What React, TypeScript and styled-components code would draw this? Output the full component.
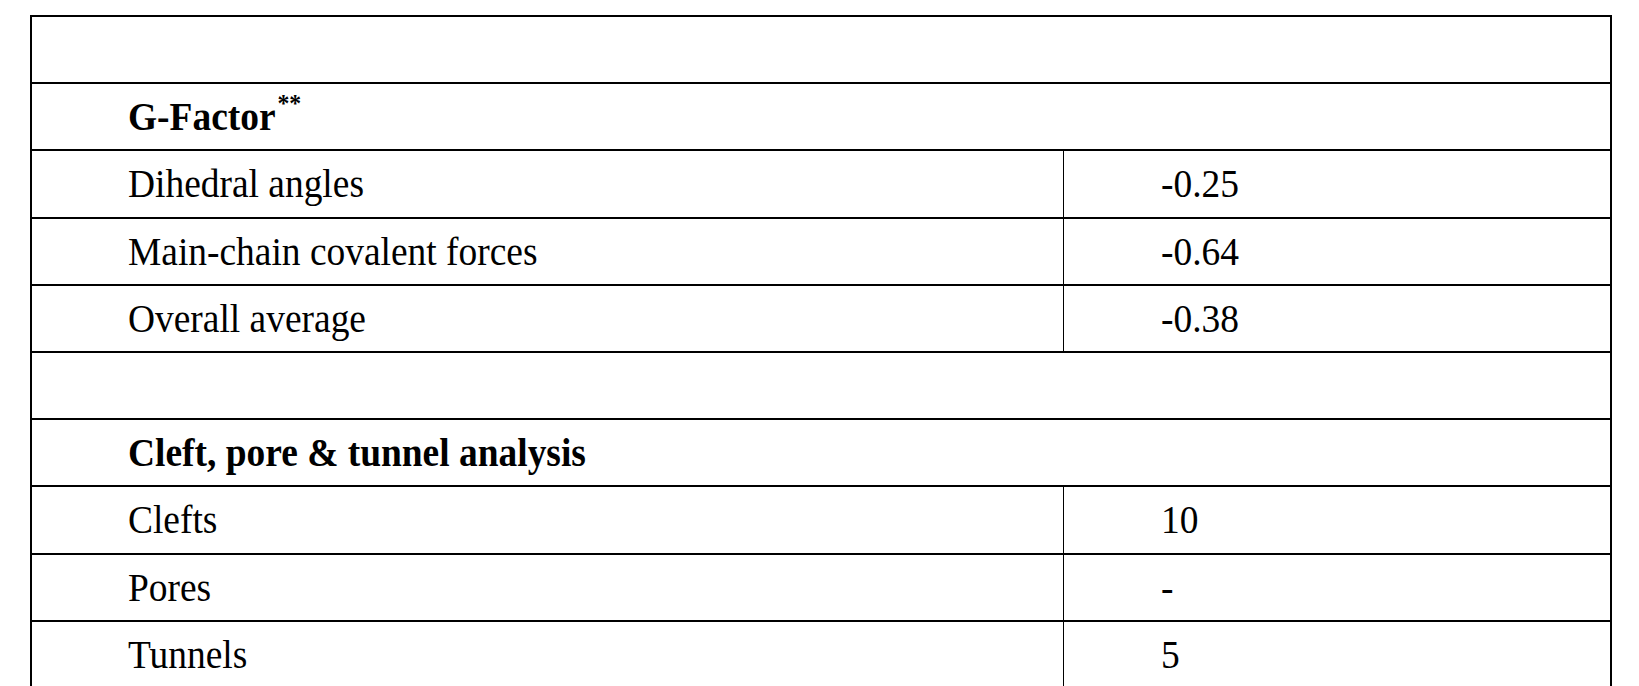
import React, { FunctionComponent } from 'react';
import styled, { createGlobalStyle } from 'styled-components';

const GlobalStyle = createGlobalStyle`
  html, body {
    margin: 0;
    padding: 0;
    background: #fff;
  }
  body {
    font-family: "Liberation Serif", "Times New Roman", serif;
    color: #000;
  }
`;

const Sheet = styled.div`
  padding: 15px 0 0 30px;
`;

const Table = styled.div`
  width: 1582px;
  box-sizing: border-box;
  border: 2px solid #000;
  border-bottom: none;
`;

const Row = styled.div`
  display: flex;
  height: 67.2px;
  box-sizing: border-box;
  border-bottom: 2px solid #000;
`;

const Cell = styled.div<{ readonly label?: boolean; readonly full?: boolean }>`
  display: flex;
  align-items: center;
  box-sizing: border-box;
  padding-left: ${({ label }) => (label ? '96px' : '97px')};
  width: ${({ full, label }) => (full ? '100%' : label ? '1032px' : 'auto')};
  flex: ${({ label, full }) => (label || full ? '0 0 auto' : '1 1 auto')};
  border-right: ${({ label, full }) => (label && !full ? '1px solid #000' : 'none')};
`;

const Text = styled.span<{ readonly bold?: boolean }>`
  display: inline-block;
  font-size: 41px;
  line-height: 1;
  font-weight: ${({ bold }) => (bold ? 700 : 400)};
  white-space: nowrap;
  transform: scaleX(0.913);
  transform-origin: left center;
`;

const Sup = styled.sup`
  font-size: 26px;
  line-height: 0;
  vertical-align: 0;
  position: relative;
  top: -18px;
  margin-left: 2px;
`;

interface IItem {
  readonly label?: string;
  readonly value?: string;
  readonly heading?: boolean;
  readonly note?: string;
}

const items: IItem[] = [
  {},
  { label: 'G-Factor', heading: true, note: '**' },
  { label: 'Dihedral angles', value: '-0.25' },
  { label: 'Main-chain covalent forces', value: '-0.64' },
  { label: 'Overall average', value: '-0.38' },
  {},
  { label: 'Cleft, pore & tunnel analysis', heading: true },
  { label: 'Clefts', value: '10' },
  { label: 'Pores', value: '-' },
  { label: 'Tunnels', value: '5' },
];

const TableRow: FunctionComponent<{ readonly item: IItem }> = ({ item }) => {
  if (item.value === undefined) {
    return (
      <Row>
        <Cell label full>
          {item.label && (
            <Text bold={item.heading}>
              {item.label}
              {item.note && <Sup>{item.note}</Sup>}
            </Text>
          )}
        </Cell>
      </Row>
    );
  }
  return (
    <Row>
      <Cell label>
        <Text>{item.label}</Text>
      </Cell>
      <Cell>
        <Text>{item.value}</Text>
      </Cell>
    </Row>
  );
};

const App: FunctionComponent = () => (
  <>
    <GlobalStyle />
    <Sheet>
      <Table>
        {items.map((item, i) => (
          <TableRow key={i} item={item} />
        ))}
      </Table>
    </Sheet>
  </>
);

export default App;
